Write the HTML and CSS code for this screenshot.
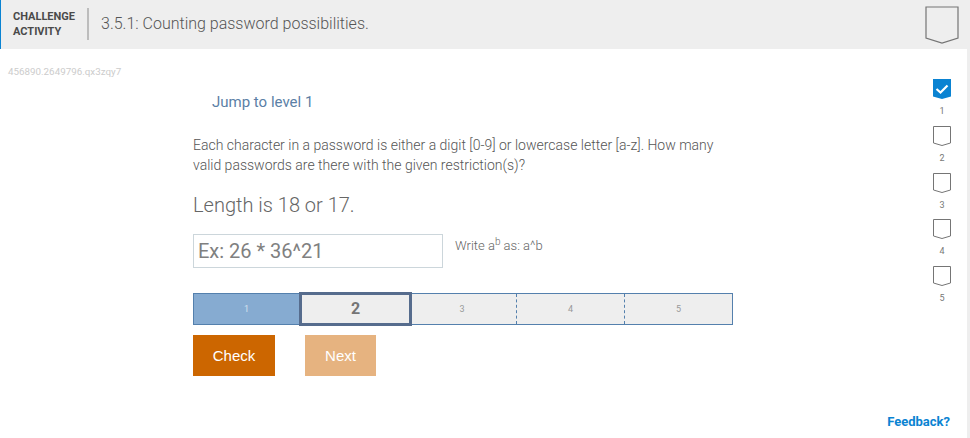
FILE: index.html
```html
<!DOCTYPE html>
<html lang="en">
<head>
<meta charset="UTF-8" />
<meta name="viewport" content="width=device-width, initial-scale=1" />
<title>Challenge activity</title>
<link rel="stylesheet" href="styles.css">
</head>
<body>
  <div class="page">
    <header class="header">
      <div class="caption">CHALLENGE<br>ACTIVITY</div>
      <h1 class="title">3.5.1: Counting password possibilities.</h1>
      <svg class="badge" width="34" height="38" viewBox="0 0 34 38">
        <path d="M1 1H33V32L17 37L1 32Z" fill="none" stroke="#757575" stroke-width="1.2" />
      </svg>
    </header>

    <div class="body-row">
      <main class="main">
        <div class="activity-id">456890.2649796.qx3zqy7</div>
        <div class="content">
          <div class="jump">Jump to level 1</div>
          <p class="prompt">Each character in a password is either a digit [0-9] or lowercase letter [a-z]. How many valid passwords are there with the given restriction(s)?</p>
          <div class="question">Length is 18 or 17.</div>
          <div class="answer-row">
            <input class="answer" type="text" placeholder="Ex: 26 * 36^21" />
            <span class="hint">Write a<sup>b</sup> as: a^b</span>
          </div>
          <div class="steps">
            <div class="step done">1</div>
            <div class="step current">2</div>
            <div class="step after-current">3</div>
            <div class="step dashed">4</div>
            <div class="step dashed">5</div>
          </div>
          <div class="buttons">
            <button class="check">Check</button>
            <button class="next">Next</button>
          </div>
        </div>
        <a class="feedback" href="#">Feedback?</a>
      </main>

      <aside class="levels">
        <div class="level">
          <svg width="18" height="20" viewBox="0 0 18 20">
            <path d="M0 0H18V17.5L9 20L0 17.5Z" fill="#0a83d2" />
            <path d="M3.5 10L7.5 13.5L14.5 6.5" fill="none" stroke="#fff" stroke-width="2.2" />
          </svg>
          <span class="level-num">1</span>
        </div>
        <div class="level">
          <svg width="18" height="20" viewBox="0 0 18 20">
            <path d="M.5 .5H17.5V17L9 19.5L.5 17Z" fill="none" stroke="#757575" />
          </svg>
          <span class="level-num">2</span>
        </div>
        <div class="level">
          <svg width="18" height="20" viewBox="0 0 18 20">
            <path d="M.5 .5H17.5V17L9 19.5L.5 17Z" fill="none" stroke="#757575" />
          </svg>
          <span class="level-num">3</span>
        </div>
        <div class="level">
          <svg width="18" height="20" viewBox="0 0 18 20">
            <path d="M.5 .5H17.5V17L9 19.5L.5 17Z" fill="none" stroke="#757575" />
          </svg>
          <span class="level-num">4</span>
        </div>
        <div class="level">
          <svg width="18" height="20" viewBox="0 0 18 20">
            <path d="M.5 .5H17.5V17L9 19.5L.5 17Z" fill="none" stroke="#757575" />
          </svg>
          <span class="level-num">5</span>
        </div>
      </aside>
    </div>
  </div>
</body>
</html>
```

FILE: styles.css
```css
* {
  box-sizing: border-box;
}
html, body {
  height: 100%;
}
body {
  margin: 0;
  font-family: Roboto, 'Liberation Sans', sans-serif;
  color: #666;
  background: #fff linear-gradient(#eee, #eee) no-repeat right top / 3px 100%;
  overflow: hidden;
}

.page {
  width: 967px;
  height: 438px;
  display: flex;
  flex-direction: column;
}

/* Header */
.header {
  width: 970px;
  height: 49px;
  flex: none;
  display: flex;
  align-items: center;
  background: #eee;
  border-left: 1px solid #0a83d2;
  padding: 0 11px 0 12px;
}
.caption {
  width: 74px;
  margin-top: -1px;
  font-size: 11px;
  font-weight: 700;
  line-height: 15px;
  color: #4a4a4a;
}
.title {
  margin: 0;
  flex: 1;
  height: 32px;
  margin-top: -2px;
  padding-left: 12px;
  border-left: 2px solid #bdbdbd;
  font-size: 16px;
  font-weight: 300;
  line-height: 31px;
  color: #555;
}
.badge {
  margin-top: 1px;
}

/* Main area */
.body-row {
  flex: 1;
  display: flex;
}
.main {
  flex: 1;
  display: flex;
  flex-direction: column;
}
.activity-id {
  padding: 17px 0 0 8px;
  font-size: 9.8px;
  line-height: 11px;
  color: #ccc;
}
.content {
  width: 540px;
  margin-left: 193px;
}
.jump {
  margin-top: 15px;
  padding-left: 19px;
  font-size: 15px;
  font-weight: 400;
  line-height: 20px;
  color: #5b7fa6;
}
.prompt {
  margin: 23px 0 0;
  font-size: 14px;
  font-weight: 300;
  line-height: 20px;
  color: #555;
}
.question {
  margin-top: 16px;
  font-size: 20px;
  font-weight: 300;
  line-height: 28px;
  color: #666;
}
.answer-row {
  margin-top: 15px;
  display: flex;
}
.answer {
  width: 250px;
  height: 34px;
  padding: 0 4px;
  border: 1px solid #ccd6db;
  border-radius: 0;
  outline: none;
  font-family: inherit;
  font-size: 20px;
  font-weight: 400;
  color: #666;
}
.answer::placeholder {
  color: #808080;
  opacity: 1;
}
.hint {
  margin: 5px 0 0 12px;
  font-size: 13px;
  font-weight: 300;
  line-height: 14px;
  color: #666;
}
.hint sup {
  font-size: 10px;
  line-height: 0;
}

/* Progress steps */
.steps {
  margin-top: 25px;
  height: 32px;
  display: flex;
  border: 1px solid #5480ad;
  background: #eee;
}
.step {
  width: 108px;
  flex: none;
  display: flex;
  align-items: center;
  justify-content: center;
  padding-bottom: 1px;
  font-size: 9px;
  color: #999;
}
.step.done {
  width: 105px;
  background: #86abd1;
  color: #d3e1ef;
}
.step.current {
  width: 113px;
  height: 34px;
  margin: -2px 0;
  padding-bottom: 2px;
  border: 3px solid #566c8d;
  font-size: 16px;
  font-weight: 700;
  color: #757575;
}
.step.after-current {
  width: 104px;
  padding-right: 4px;
}
.step.dashed {
  border-left: 1px dashed #5480ad;
}

/* Buttons */
.buttons {
  margin-top: 10px;
  display: flex;
  gap: 30px;
}
button {
  height: 41px;
  padding-bottom: 2px;
  border: none;
  border-radius: 0;
  font-family: 'Liberation Sans', sans-serif;
  font-size: 15px;
  color: #fff;
}
.check {
  width: 82px;
  background: #cc6600;
}
.next {
  width: 71px;
  background: #e6b380;
}

.feedback {
  margin: auto -17px 8px auto;
  font-size: 13px;
  font-weight: 700;
  line-height: 16px;
  color: #0a83d2;
  text-decoration: none;
}

/* Level sidebar */
.levels {
  width: 34px;
  padding-top: 30px;
  display: flex;
  flex-direction: column;
  flex: none;
}
.level {
  width: 18px;
  height: 46.8px;
  display: flex;
  flex-direction: column;
  align-items: center;
}
.level-num {
  margin-top: 7px;
  font-size: 9px;
  line-height: 11px;
  color: #777;
}
.level svg {
  flex: none;
}
```
